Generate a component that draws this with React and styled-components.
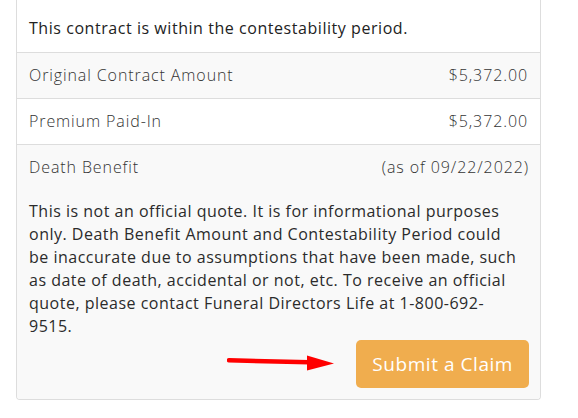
import React from "react";
import styled, { createGlobalStyle } from "styled-components";

const Global = createGlobalStyle`
  html, body { margin: 0; padding: 0; background: #fff; }
  body { font-family: "Open Sans", "Liberation Sans", sans-serif; color: #333; }
`;

const Page = styled.div`
  padding: 0 37px 0 16px;
`;

const Card = styled.div`
  width: 525px;
  box-sizing: border-box;
  border: 1px solid #ddd;
  border-top: none;
  border-radius: 0 0 4px 4px;
  background: #fff;
  overflow: hidden;
`;

const Notice = styled.div`
  padding: 17px 12px 13px;
  font-size: 16px;
  line-height: 22px;
  font-weight: 500;
  letter-spacing: 0.55px;
  color: #222;
`;

const Row = styled.div`
  display: flex;
  justify-content: space-between;
  align-items: center;
  padding: 12px;
  line-height: 21px;
  font-size: 16px;
  font-weight: 300;
  letter-spacing: 0.9px;
  color: #333;
  border-top: 1px solid #ddd;
  background: ${(p) => (p.$shaded ? "#f9f9f9" : "#fff")};
`;

const Section = styled.div`
  border-top: 1px solid #ddd;
  background: #f9f9f9;
  padding: 12px 11px 11px 12px;
`;

const Line = styled.div`
  display: flex;
  justify-content: space-between;
  font-size: 16px;
  line-height: 21px;
  font-weight: 300;
  letter-spacing: 0.9px;
  color: #333;
`;

const Disclaimer = styled.p`
  margin: 22px 0 0;
  font-size: 16px;
  line-height: 23px;
  font-weight: 500;
  letter-spacing: 0.5px;
  white-space: nowrap;
  color: #2b2b2b;
`;

const Actions = styled.div`
  display: flex;
  justify-content: flex-end;
  align-items: center;
  gap: 21px;
  margin-top: 2px;
`;

const Arrow = styled.svg`
  display: block;
  width: 108px;
  height: 18px;
  margin-top: -3px;
`;

const Button = styled.button`
  background: #f0ad4e;
  color: #fff;
  border: none;
  border-radius: 5px;
  height: 48px;
  padding: 0 16px;
  font-family: "Open Sans", "Liberation Sans", sans-serif;
  font-size: 19px;
  font-weight: 400;
  letter-spacing: 0.55px;
  cursor: pointer;
`;

export default function App() {
  return (
    <>
      <Global />
      <Page>
        <Card>
          <Notice>This contract is within the contestability period.</Notice>
          <Row $shaded>
            <span>Original Contract Amount</span>
            <span>$5,372.00</span>
          </Row>
          <Row>
            <span>Premium Paid-In</span>
            <span>$5,372.00</span>
          </Row>
          <Section>
            <Line>
              <span>Death Benefit</span>
              <span>(as of 09/22/2022)</span>
            </Line>
            <Disclaimer>
              This is not an official quote. It is for informational purposes
              <br />
              only. Death Benefit Amount and Contestability Period could
              <br />
              be inaccurate due to assumptions that have been made, such
              <br />
              as date of death, accidental or not, etc. To receive an official
              <br />
              quote, please contact Funeral Directors Life at 1-800-692-
              <br />
              9515.
            </Disclaimer>
            <Actions>
              <Arrow viewBox="0 0 108 18">
                <path d="M2 6.3 L82 8.2" stroke="#ff0000" strokeWidth="4.5" strokeLinecap="round" fill="none" />
                <path d="M80 1.5 L107 9.5 L80 16.5 Z" fill="#ff0000" />
              </Arrow>
              <Button>Submit a Claim</Button>
            </Actions>
          </Section>
        </Card>
      </Page>
    </>
  );
}
